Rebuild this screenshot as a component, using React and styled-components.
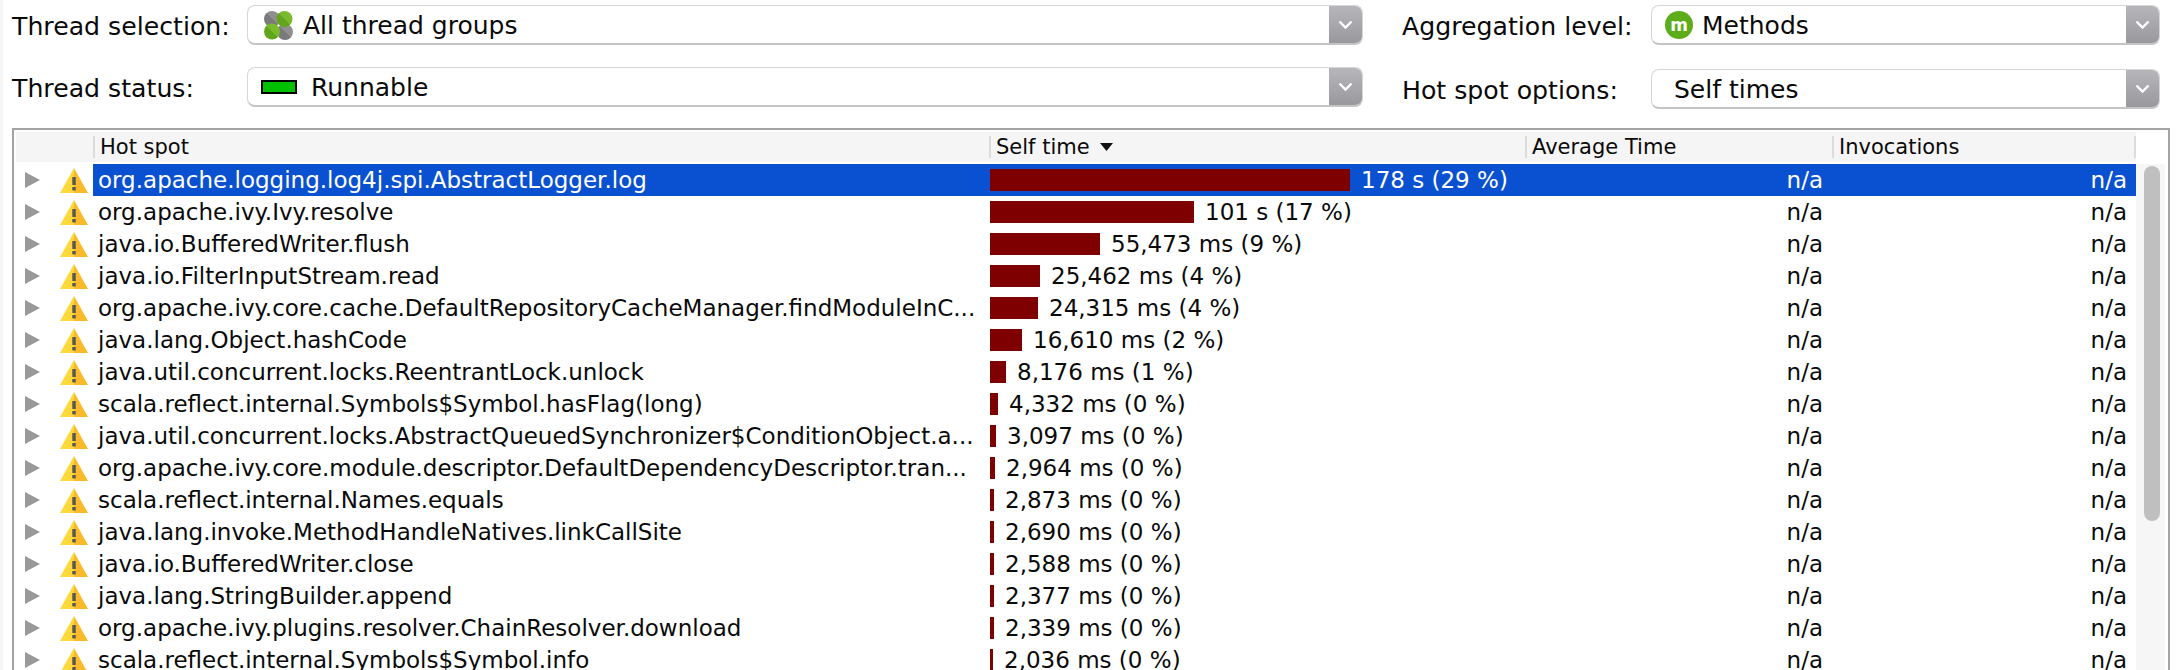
import React from 'react';
import styled, { createGlobalStyle } from 'styled-components';

const Global = createGlobalStyle`
  html, body { margin: 0; padding: 0; background: #fff; overflow: hidden; }
  body { font-family: "DejaVu Sans", "Liberation Sans", sans-serif; color: #0a0a0a; }
`;

const Page = styled.div`
  width: 2176px;
  height: 670px;
  box-sizing: border-box;
  border-left: 3px solid #f5f5f5;
  padding-left: 9px;
  overflow: hidden;
`;

const Toolbar = styled.div`
  display: flex;
  height: 128px;
`;

const FormColumn = styled.div`
  display: grid;
  grid-template-columns: ${p => p.$labelWidth}px ${p => p.$comboWidth}px;
  grid-auto-rows: 40px;
  row-gap: ${p => p.$rowGap}px;
  padding-top: 5px;
  margin-left: ${p => p.$offset || 0}px;
`;

const Label = styled.div`
  display: flex;
  align-items: center;
  font-size: 25.2px;
  white-space: nowrap;
  padding-top: 3px;
`;

const Combo = styled.div`
  display: flex;
  align-items: center;
  box-sizing: border-box;
  height: 40px;
  background: #fff;
  border: 1px solid #d6d6d6;
  border-bottom: 2px solid #c4c4c4;
  border-radius: 8px;
  overflow: hidden;
`;

const ComboValue = styled.div`
  flex: 1;
  display: flex;
  align-items: center;
  gap: ${p => p.$gap || 10}px;
  padding-left: ${p => p.$pad}px;
  padding-top: 1px;
  font-size: 25px;
  white-space: nowrap;
`;

const ComboButton = styled.div`
  width: 33px;
  align-self: stretch;
  display: flex;
  align-items: center;
  justify-content: center;
  background: linear-gradient(#b7b7bb, #98989d);
`;

const Table = styled.div`
  box-sizing: border-box;
  width: 2158px;
  height: 542px;
  border: 2px solid #a3a3a3;
  border-bottom: none;
  padding: 2px 0 0 2px;
  display: grid;
  grid-template-columns: 2120px 32px;
  grid-template-rows: 30px 1fr;
  row-gap: 2px;
  overflow: hidden;
`;

const HeaderRow = styled.div`
  display: grid;
  grid-template-columns: 77px 896px 536px 307px 304px;
  background: #f5f5f5;
  grid-column: 1;
`;

const HeaderCorner = styled.div`
  background: #fff;
  grid-column: 2;
`;

const HeaderCell = styled.div`
  position: relative;
  display: flex;
  align-items: center;
  gap: 10px;
  padding-left: 7px;
  font-size: 21px;
  white-space: nowrap;
  &::before {
    content: '';
    position: absolute;
    left: 0;
    top: 4px;
    bottom: 4px;
    width: 2px;
    background: #dcdcdc;
  }
`;

const HeaderBlank = styled.div``;

const HeaderEnd = styled.div`
  position: absolute;
  right: 0;
  top: 4px;
  bottom: 4px;
  width: 2px;
  background: #dcdcdc;
`;

const Rows = styled.div`
  grid-column: 1;
  display: flex;
  flex-direction: column;
`;

const Row = styled.div`
  display: grid;
  flex: none;
  height: 32px;
  grid-template-columns: 77px 896px 536px 307px 304px;
  font-size: 23px;
  color: ${p => (p.$selected ? '#fff' : '#0a0a0a')};
`;

const Gutter = styled.div`
  display: flex;
  align-items: center;
  padding-left: 9px;
  gap: 20px;
  background: #fff;
`;

const NameCell = styled.div`
  display: flex;
  align-items: center;
  padding-left: 5px;
  white-space: nowrap;
  overflow: hidden;
  background: ${p => (p.$selected ? '#0a51d2' : '#fff')};
`;

const SelfCell = styled.div`
  display: flex;
  align-items: center;
  gap: 11px;
  padding-left: 1px;
  white-space: nowrap;
  background: ${p => (p.$selected ? '#0a51d2' : '#fff')};
`;

const Bar = styled.div`
  height: 22px;
  background: #7f0000;
  flex: none;
`;

const NaCell = styled.div`
  display: flex;
  align-items: center;
  justify-content: flex-end;
  padding-right: 9px;
  background: ${p => (p.$selected ? '#0a51d2' : '#fff')};
`;

const Track = styled.div`
  grid-column: 2;
  position: relative;
  background: #f6f6f6;
  border-right: 3px solid #fff;
`;

const Thumb = styled.div`
  position: absolute;
  left: 8px;
  top: 2px;
  width: 16px;
  height: 355px;
  border-radius: 8px;
  background: #bfbfbf;
`;

const RunnableSwatch = styled.span`
  display: block;
  box-sizing: border-box;
  width: 36px;
  height: 14px;
  background: #00c000;
  border: 2px solid #000;
`;

const Chevron = () => (
  <svg width="15" height="10" viewBox="0 0 15 10">
    <path d="M1.5 1.5 L7.5 7.5 L13.5 1.5" fill="none" stroke="#fff" strokeWidth="2.4" />
  </svg>
);

const Arrow = () => (
  <svg width="15" height="16" viewBox="0 0 15 16" style={{ flex: 'none' }}>
    <polygon points="0,0 15,8 0,16" fill="#999" />
  </svg>
);

const Warning = () => (
  <svg width="28" height="25" viewBox="0 0 28 25" style={{ flex: 'none' }}>
    <polygon points="14,0 0,25 14,25" fill="#ffd83b" />
    <polygon points="14,0 28,25 14,25" fill="#fbba2c" />
    <rect x="12.3" y="9" width="3.4" height="8" fill="#555" />
    <rect x="12.3" y="19" width="3.4" height="3.4" fill="#555" />
  </svg>
);

const GroupsIcon = () => (
  <svg width="29" height="29" viewBox="0 0 29 29" style={{ flex: 'none' }}>
    <defs>
      <linearGradient id="g" x1="0" y1="1" x2="1" y2="0">
        <stop offset="0.5" stopColor="#62a51d" />
        <stop offset="0.5" stopColor="#79bb2b" />
      </linearGradient>
      <linearGradient id="k" x1="0" y1="1" x2="1" y2="0">
        <stop offset="0.5" stopColor="#7a7a7a" />
        <stop offset="0.5" stopColor="#8f8f8f" />
      </linearGradient>
    </defs>
    <circle cx="8" cy="8" r="8" fill="url(#k)" />
    <circle cx="21" cy="21" r="8" fill="url(#k)" />
    <circle cx="20.5" cy="8" r="8" fill="url(#g)" />
    <circle cx="8" cy="20.5" r="8" fill="url(#g)" />
  </svg>
);

const MethodIcon = () => (
  <svg width="28" height="28" viewBox="0 0 28 28" style={{ flex: 'none' }}>
    <circle cx="14" cy="14" r="14" fill="#5dac19" />
    <text x="14" y="19.5" textAnchor="middle" fontFamily="DejaVu Sans" fontWeight="700" fontSize="17" fill="#fff">m</text>
  </svg>
);

const data = [
  ['org.apache.logging.log4j.spi.AbstractLogger.log', 360, '178 s (29 %)'],
  ['org.apache.ivy.Ivy.resolve', 204, '101 s (17 %)'],
  ['java.io.BufferedWriter.flush', 110, '55,473 ms (9 %)'],
  ['java.io.FilterInputStream.read', 50, '25,462 ms (4 %)'],
  ['org.apache.ivy.core.cache.DefaultRepositoryCacheManager.findModuleInC...', 48, '24,315 ms (4 %)'],
  ['java.lang.Object.hashCode', 32, '16,610 ms (2 %)'],
  ['java.util.concurrent.locks.ReentrantLock.unlock', 16, '8,176 ms (1 %)'],
  ['scala.reflect.internal.Symbols$Symbol.hasFlag(long)', 8, '4,332 ms (0 %)'],
  ['java.util.concurrent.locks.AbstractQueuedSynchronizer$ConditionObject.a...', 6, '3,097 ms (0 %)'],
  ['org.apache.ivy.core.module.descriptor.DefaultDependencyDescriptor.tran...', 5, '2,964 ms (0 %)'],
  ['scala.reflect.internal.Names.equals', 4, '2,873 ms (0 %)'],
  ['java.lang.invoke.MethodHandleNatives.linkCallSite', 4, '2,690 ms (0 %)'],
  ['java.io.BufferedWriter.close', 4, '2,588 ms (0 %)'],
  ['java.lang.StringBuilder.append', 4, '2,377 ms (0 %)'],
  ['org.apache.ivy.plugins.resolver.ChainResolver.download', 4, '2,339 ms (0 %)'],
  ['scala.reflect.internal.Symbols$Symbol.info', 3, '2,036 ms (0 %)'],
];

export default function App() {
  return (
    <Page>
      <Global />
      <Toolbar>
        <FormColumn $labelWidth={235} $comboWidth={1116} $rowGap={22}>
          <Label>Thread selection:</Label>
          <Combo>
            <ComboValue $pad={16}><GroupsIcon />All thread groups</ComboValue>
            <ComboButton><Chevron /></ComboButton>
          </Combo>
          <Label>Thread status:</Label>
          <Combo>
            <ComboValue $pad={13} $gap={14}><RunnableSwatch />Runnable</ComboValue>
            <ComboButton><Chevron /></ComboButton>
          </Combo>
        </FormColumn>
        <FormColumn $labelWidth={249} $comboWidth={509} $rowGap={24} $offset={39}>
          <Label>Aggregation level:</Label>
          <Combo>
            <ComboValue $pad={13} $gap={9}><MethodIcon />Methods</ComboValue>
            <ComboButton><Chevron /></ComboButton>
          </Combo>
          <Label>Hot spot options:</Label>
          <Combo>
            <ComboValue $pad={22}>Self times</ComboValue>
            <ComboButton><Chevron /></ComboButton>
          </Combo>
        </FormColumn>
      </Toolbar>
      <Table>
        <HeaderRow>
          <HeaderBlank />
          <HeaderCell>Hot spot</HeaderCell>
          <HeaderCell>
            Self time
            <svg width="13" height="8" viewBox="0 0 13 8"><polygon points="0,0 13,0 6.5,8" fill="#111" /></svg>
          </HeaderCell>
          <HeaderCell>Average Time</HeaderCell>
          <HeaderCell>Invocations<HeaderEnd /></HeaderCell>
        </HeaderRow>
        <HeaderCorner />
        <Rows>
          {data.map(([name, width, label], i) => (
            <Row key={name} $selected={i === 0}>
              <Gutter><Arrow /><Warning /></Gutter>
              <NameCell $selected={i === 0}>{name}</NameCell>
              <SelfCell $selected={i === 0}>
                <Bar style={{ width }} />
                {label}
              </SelfCell>
              <NaCell $selected={i === 0}>n/a</NaCell>
              <NaCell $selected={i === 0}>n/a</NaCell>
            </Row>
          ))}
        </Rows>
        <Track><Thumb /></Track>
      </Table>
    </Page>
  );
}
